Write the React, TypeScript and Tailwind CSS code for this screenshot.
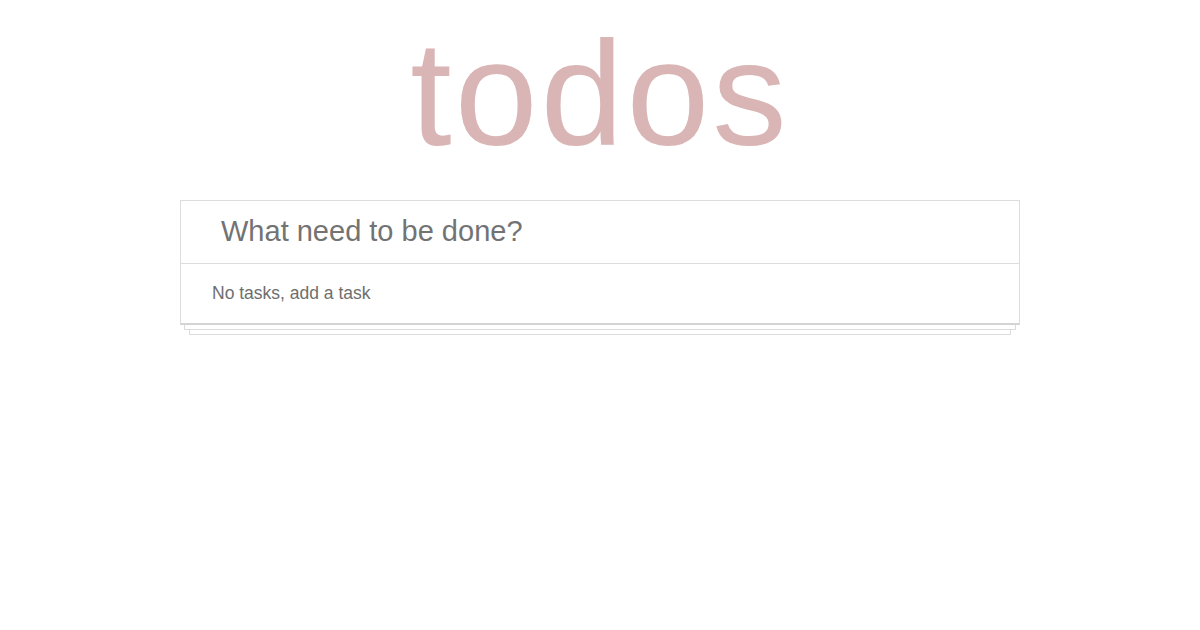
export default function App() {
  return (
    <div className="min-h-[630px] bg-white font-['Liberation_Sans',Arial,sans-serif]">
      <h1 className="pt-[14px] text-center text-[149px] leading-[160px] text-[#d9b5b5] tracking-[3px]">todos</h1>
      <div className="mx-auto mt-[26px] w-[840px]">
        <div className="border border-b-2 border-[#dcdcdc] border-b-[#d4d4d4] bg-white">
          <div className="flex h-[63px] items-center border-b border-[#dcdcdc] pl-[40px]">
            <span className="text-[29px] text-[#737373]">What need to be done?</span>
          </div>
          <div className="flex h-[59px] items-center pl-[31px]">
            <span className="text-[17.5px] text-[#6e6e6e]">No tasks, add a task</span>
          </div>
        </div>
        <div className="mx-[4px] h-[5px] border border-t-0 border-[#dcdcdc] bg-white" />
        <div className="mx-[9px] h-[5px] border border-t-0 border-[#dcdcdc] bg-white" />
      </div>
    </div>
  );
}
